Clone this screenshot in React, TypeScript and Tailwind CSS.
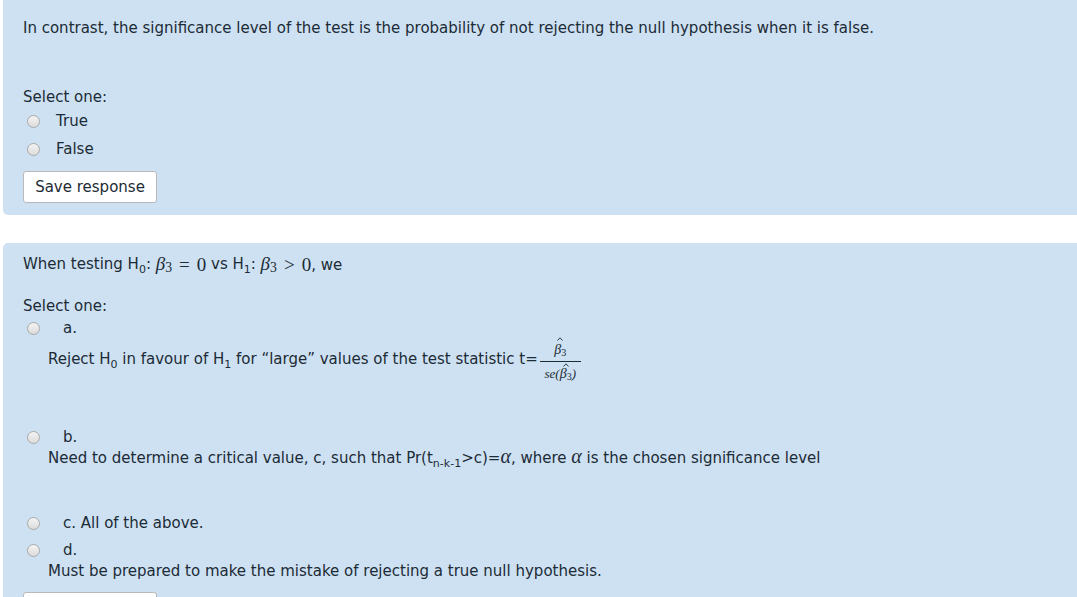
import React from "react";

/**
 * Quiz page
 * Two Moodle-style question panels with radio options
 */

function Radio() {
  return (
    <span className="inline-block w-[13px] h-[13px] shrink-0 rounded-full border border-[#a9a9a9] bg-gradient-to-b from-[#f4f4f4] to-[#dcdcdc]" />
  );
}

function Beta({ hat = false, size = "text-[19px]" }: { hat?: boolean; size?: string }) {
  return (
    <span className={`font-['Liberation_Serif',serif] italic ${size} relative inline-block`}>
      {hat && (
        <svg
          className="absolute left-[3px] top-[-3px]"
          width="6"
          height="4"
          viewBox="0 0 6 4"
          fill="none"
          stroke="#1c2b36"
          strokeWidth="0.9"
        >
          <polyline points="0.5,3.5 3,0.8 5.5,3.5" />
        </svg>
      )}
      β
      <span className="not-italic text-[0.72em] relative top-[0.2em]">3</span>
    </span>
  );
}

function Sub({ children }: { children: React.ReactNode }) {
  return <span className="text-[11px] relative top-[4px]">{children}</span>;
}

function SaveButton() {
  return (
    <button className="h-[32px] w-[134px] rounded-[3px] border border-[#b9b9b9] bg-white text-[15px] text-[#1c2b36]">
      Save response
    </button>
  );
}

function OptionRow({ children }: { children: React.ReactNode }) {
  return (
    <div className="flex items-center h-[22px] pl-[4px]">
      <Radio />
      {children}
    </div>
  );
}

export default function App() {
  return (
    <div className="w-[1077px] h-[597px] overflow-hidden bg-white font-['DejaVu_Sans',sans-serif] text-[15px] leading-[20px] text-[#1c2b36]">
      {/* Question 1 */}
      <div className="ml-[3px] w-[1090px] rounded-b-[5px] bg-[#cde1f2] pl-[20px] pt-[18px] pb-[12px]">
        <p className="h-[20px]">
          In contrast, the significance level of the test is the probability of not rejecting the null hypothesis when it is false.
        </p>
        <p className="mt-[49px]">Select one:</p>
        <div className="mt-[3px]">
          <OptionRow>
            <span className="ml-[16px]">True</span>
          </OptionRow>
          <div className="mt-[6px]">
            <OptionRow>
              <span className="ml-[16px]">False</span>
            </OptionRow>
          </div>
        </div>
        <div className="mt-[11px]">
          <SaveButton />
        </div>
      </div>

      {/* Question 2 */}
      <div className="ml-[3px] mt-[28px] w-[1090px] rounded-t-[5px] bg-[#cde1f2] pl-[20px] pt-[11px] pb-[12px]">
        <p className="h-[21px] flex items-center whitespace-pre">
          <span>When testing H<Sub>0</Sub>: </span>
          <Beta />
          <span className="font-['Liberation_Serif',serif] text-[19px] mx-[7px]">=</span>
          <span className="font-['Liberation_Serif',serif] text-[19px]">0</span>
          <span> vs H<Sub>1</Sub>: </span>
          <Beta />
          <span className="font-['Liberation_Serif',serif] text-[19px] mx-[7px]">&gt;</span>
          <span className="font-['Liberation_Serif',serif] text-[19px]">0</span>
          <span>, we</span>
        </p>
        <p className="mt-[21px]">Select one:</p>
        <div className="mt-[1px]">
          {/* a */}
          <OptionRow>
            <span className="ml-[23px]">a.</span>
          </OptionRow>
          <div className="pl-[25px] flex items-start h-[44px]">
            <span className="mt-[10px]">
              Reject H<Sub>0</Sub> in favour of H<Sub>1</Sub> for “large” values of the test statistic t=
            </span>
            <span className="inline-flex flex-col items-center ml-[2px]">
              <span className="h-[22px] flex items-end">
                <Beta hat size="text-[14px]" />
              </span>
              <span className="w-[41px] border-t border-[#1c2b36]" />
              <span className="h-[20px] pt-[4px] font-['Liberation_Serif',serif] italic text-[13px] leading-[16px] whitespace-nowrap">
                se(<Beta hat size="text-[14px]" />)
              </span>
            </span>
          </div>

          {/* b */}
          <div className="mt-[43px]">
            <OptionRow>
              <span className="ml-[23px]">b.</span>
            </OptionRow>
            <p className="pl-[25px] h-[20px] -mt-[2px]">
              Need to determine a critical value, c, such that Pr(t<Sub>n-k-1</Sub>&gt;c)=
              <span className="font-['Liberation_Serif',serif] italic text-[20px]">α</span>, where{" "}
              <span className="font-['Liberation_Serif',serif] italic text-[20px]">α</span> is the chosen significance level
            </p>
          </div>

          {/* c */}
          <div className="mt-[46px]">
            <OptionRow>
              <span className="ml-[23px]">c. All of the above.</span>
            </OptionRow>
          </div>

          {/* d */}
          <div className="mt-[5px]">
            <OptionRow>
              <span className="ml-[23px]">d.</span>
            </OptionRow>
            <p className="pl-[25px] h-[20px]">
              Must be prepared to make the mistake of rejecting a true null hypothesis.
            </p>
          </div>
        </div>
        <div className="mt-[11px]">
          <SaveButton />
        </div>
      </div>
    </div>
  );
}
